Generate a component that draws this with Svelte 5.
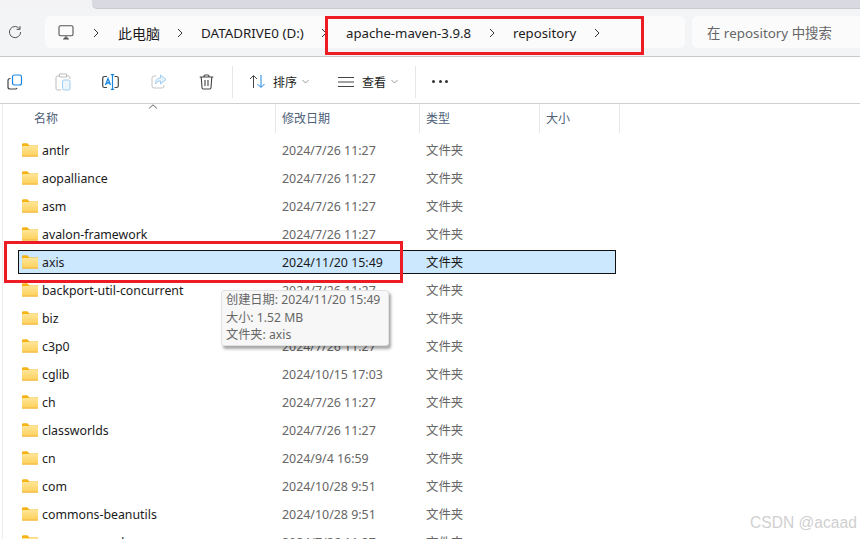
<script>
  const rows = [
    ['antlr', '2024/7/26 11:27'],
    ['aopalliance', '2024/7/26 11:27'],
    ['asm', '2024/7/26 11:27'],
    ['avalon-framework', '2024/7/26 11:27'],
    ['axis', '2024/11/20 15:49', true],
    ['backport-util-concurrent', '2024/7/26 11:27'],
    ['biz', '2024/7/26 11:27'],
    ['c3p0', '2024/7/26 11:27'],
    ['cglib', '2024/10/15 17:03'],
    ['ch', '2024/7/26 11:27'],
    ['classworlds', '2024/7/26 11:27'],
    ['cn', '2024/9/4 16:59'],
    ['com', '2024/10/28 9:51'],
    ['commons-beanutils', '2024/10/28 9:51'],
    ['commons-codec', '2024/7/26 11:27']
  ];
</script>

{#snippet chev()}
  <svg class="chev" width="6" height="10" viewBox="0 0 6 10"><path d="M1 1l4 4-4 4" fill="none" stroke="#333" stroke-width="1"/></svg>
{/snippet}
{#snippet caret()}
  <svg class="caret" width="7" height="5" viewBox="0 0 7 5"><path d="M.5 1l3 3 3-3" fill="none" stroke="#999" stroke-width="1"/></svg>
{/snippet}

<div class="win">
  <div class="tabs"><div class="tabfill"></div></div>
  <div class="addr">
    <svg class="refresh" width="14" height="14" viewBox="0 0 14 14"><path d="M11.8 4.2A5.6 5.6 0 1 0 12.6 7" fill="none" stroke="#555" stroke-width="1"/><path d="M12 1v3.4H8.6" fill="none" stroke="#555" stroke-width="1"/></svg>
    <div class="crumbs">
      <svg class="pc" width="16" height="15" viewBox="0 0 16 15"><rect x="1" y=".7" width="14" height="10" rx="1.5" fill="none" stroke="#555" stroke-width="1.1"/><path d="M6 13h4M5 14h6M8 11v2" stroke="#555" stroke-width="1.1"/></svg>
      <span class="c1">{@render chev()}</span>
      <span class="t w1">此电脑</span>
      <span class="c2">{@render chev()}</span>
      <span class="t w2">DATADRIVE0 (D:)</span>
      <span class="c3">{@render chev()}</span>
      <span class="t w3">apache-maven-3.9.8</span>
      <span class="c4">{@render chev()}</span>
      <span class="t w4">repository</span>
      <span class="c5">{@render chev()}</span>
    </div>
    <div class="search">在 repository 中搜索</div>
  </div>
  <div class="toolbar">
    <svg class="ic i1" width="16" height="16" viewBox="0 0 16 16"><rect x="5.5" y="1" width="9" height="10" rx="2" fill="none" stroke="#1a86e0" stroke-width="1.2"/><path d="M3.5 4.5H3a2 2 0 0 0-2 2V13a2 2 0 0 0 2 2h5.5a2 2 0 0 0 1.5-1" fill="none" stroke="#444" stroke-width="1.2"/></svg>
    <svg class="ic i2" width="16" height="18" viewBox="0 0 16 18"><path d="M4 3H2.500A1.500 1.500 0 0 0 1 4.500v11A1.500 1.500 0 0 0 2.500 17H6M12 3h1.500A1.500 1.500 0 0 1 15 4.500V6M4.500 1h7v3h-7z" fill="none" stroke="#bbb" stroke-width="1"/><rect x="7.500" y="7" width="7.500" height="10" rx="1.500" fill="#eef6fd" stroke="#9fcdf0"/></svg>
    <svg class="ic i3" width="17" height="16" viewBox="0 0 17 16"><path d="M5 2.500H2.500A1.800 1.800 0 0 0 .7 4.300v7.400a1.800 1.800 0 0 0 1.800 1.800H5M12.500 2.500h2a1.800 1.800 0 0 1 1.800 1.800v7.400a1.800 1.800 0 0 1-1.800 1.800h-2" fill="none" stroke="#444" stroke-width="1.200"/><path d="M8.800.7h3.400M8.800 15.300h3.400M10.500.7v14.600" fill="none" stroke="#1a86e0" stroke-width="1.200"/><path d="M3.500 11l2.500-6.500L8.500 11M4.500 9h3" fill="none" stroke="#1a86e0" stroke-width="1.300"/></svg>
    <svg class="ic i4" width="16" height="15" viewBox="0 0 16 15"><path d="M5 2H3a2 2 0 0 0-2 2v8a2 2 0 0 0 2 2h8a2 2 0 0 0 2-2v-1" fill="none" stroke="#c4c4c4" stroke-width="1"/><path d="M9.500 1v3C6 4 4.500 6.500 4.500 10c1.200-2.200 3-3 5-3v3L15 5.500z" fill="#e6f2fc" stroke="#9fcdf0"/></svg>
    <svg class="ic i5" width="15" height="16" viewBox="0 0 15 16"><path d="M.700 3h13.600M5 3V2.200A1.200 1.200 0 0 1 6.200 1h2.600A1.200 1.200 0 0 1 10 2.200V3M2.200 3l.8 10.800A1.300 1.300 0 0 0 4.300 15h6.400a1.300 1.300 0 0 0 1.300-1.200L12.800 3M6 6v6M9 6v6" fill="none" stroke="#444" stroke-width="1.100"/></svg>
    <div class="sep s1"></div>
    <svg class="ic i6" width="16" height="13" viewBox="0 0 16 13"><path d="M1 4l3.500-3.500L8 4M4.500 1v12" fill="none" stroke="#444" stroke-width="1"/><path d="M8.500 9l3.500 3.500L15.500 9M12 0v12" fill="none" stroke="#1a86e0" stroke-width="1"/></svg>
    <span class="tb l1">排序</span>{@render caret()}
    <svg class="ic i7" width="16" height="10" viewBox="0 0 16 10"><path d="M0 .5h16M0 5h16M0 9.500h16" stroke="#444" stroke-width="1"/></svg>
    <span class="tb l2">查看</span>{@render caret()}
    <div class="sep s2"></div>
    <div class="dots"><i></i><i></i><i></i></div>
  </div>
  <div class="list">
    <svg class="sort" width="10" height="5" viewBox="0 0 10 5"><path d="M1 4.500L5 .8l4 3.700" fill="none" stroke="#666" stroke-width="1"/></svg>
    <div class="head">
      <div class="h name">名称</div>
      <div class="h date">修改日期</div>
      <div class="h type">类型</div>
      <div class="h size">大小</div>
    </div>
    <div class="rows">
      {#each rows as r}
        <div class="row" class:sel={r[2]}>
          <svg class="folder" width="16" height="14" viewBox="0 0 16 14">
            <path d="M0 1.500A1.200 1.200 0 0 1 1.200.3h4L7.500 2.500H16V5H0z" fill="#f5b316"/>
            <rect x="0" y="3" width="16" height="10.500" rx="1" fill="url(#fg)"/>
            <rect x="0" y="12.600" width="16" height="1" fill="#f0b63c"/>
          </svg>
          <span class="n">{r[0]}</span>
          <span class="d">{r[1]}</span>
          <span class="k">文件夹</span>
        </div>
      {/each}
    </div>
    <svg width="0" height="0" class="defs"><defs><linearGradient id="fg" x1="0" y1="0" x2="0" y2="1"><stop offset="0" stop-color="#ffe596"/><stop offset="1" stop-color="#fdcf58"/></linearGradient></defs></svg>
  </div>

  <div class="mark m1"></div>
  <div class="mark m2"></div>
  <div class="tip">
    <div>创建日期: 2024/11/20 15:49</div>
    <div>大小: 1.52 MB</div>
    <div>文件夹: axis</div>
  </div>
  <div class="wm">CSDN @acaad</div>
</div>

<style>
  :global(body) { margin: 0; background: #fff; }
  .win {
    position: relative; width: 860px; height: 539px; overflow: hidden; background: #fff;
    font-family: "Noto Sans", "Noto Sans CJK SC", sans-serif; font-size: 12px; color: #1a1a1a;
  }
  .tabs { height: 9px; background: #f3f3f5; padding-left: 92px; }
  .tabfill { height: 8px; background: #d8d9e1; border-bottom: 1px solid #c9c9cf; border-bottom-left-radius: 5px; }
  .addr {
    height: 48px; box-sizing: border-box; background: #f3f4f6; border-bottom: 1px solid #c9c9c9;
    display: flex; align-items: center; padding-left: 8px; padding-bottom: 1px;
  }
  .refresh { flex: none; margin-right: 23px; }
  .crumbs {
    width: 640px; height: 32px; background: #fbfbfc; border-radius: 6px; display: flex; align-items: center;
    padding-left: 13px; padding-top: 1px; box-sizing: border-box; flex: none;
  }
  .t { font-size: 13.2px; white-space: nowrap; color: #1c1c1c; flex: none; }
  .pc { flex: none; }
  .c1, .c2, .c3, .c4, .c5 { display: flex; flex: none; }
  .c1 { margin-left: 19px; }
  .w1 { margin-left: 19px; width: 42px; font-size: 14px; }
  .c2 { margin-left: 17px; }
  .w2 { margin-left: 18px; width: 103px; font-size: 13.4px; }
  .c3 { margin-left: 17px; }
  .w3 { margin-left: 19px; width: 125px; }
  .c4 { margin-left: 18px; }
  .w4 { margin-left: 18px; width: 63px; }
  .c5 { margin-left: 18px; }
  .search {
    margin-left: 7px; flex: 1; height: 32px; line-height: 34px; background: #fbfbfc; border-radius: 6px 0 0 6px;
    padding-left: 15px; color: #666; font-size: 13.4px; white-space: nowrap;
  }
  .toolbar { height: 47px; box-sizing: border-box; border-bottom: 1px solid #cfcfcf; display: flex; align-items: center; padding-top: 3px; }
  .ic { flex: none; }
  .i1 { margin-left: 7px; }
  .i2 { margin-left: 32px; }
  .i3 { margin-left: 31px; }
  .i4 { margin-left: 32px; }
  .i5 { margin-left: 32px; }
  .sep { width: 1px; height: 32px; background: #e6e6e6; flex: none; }
  .s1 { margin-left: 18px; }
  .i6 { margin-left: 16px; }
  .tb { font-size: 12px; color: #222; flex: none; }
  .l1 { margin-left: 8px; width: 25px; }
  .caret { flex: none; margin-left: 4px; }
  .i7 { margin-left: 29px; }
  .l2 { margin-left: 8px; width: 25px; }
  .s2 { margin-left: 17px; }
  .dots { display: flex; gap: 3.5px; margin-left: 16px; }
  .dots i { width: 3px; height: 3px; border-radius: 50%; background: #333; display: block; }
  .list { position: relative; margin-left: 2px; border-left: 1px solid #ededed; }
  .sort { position: absolute; left: 145px; top: 0; }
  .defs { position: absolute; }
  .head { display: grid; grid-template-columns: 273px 144px 120px 80px; height: 27px; }
  .h { color: #4d6078; font-size: 12px; line-height: 29px; border-right: 1px solid #e6e6e6; white-space: nowrap; padding-left: 6px; }
  .name { padding-left: 31px; }
  .rows { padding-top: 7px; }
  .row {
    height: 24px; margin: 0 0 4px 15px; width: 598px; box-sizing: border-box; border: 1px solid transparent;
    display: grid; grid-template-columns: 20px 240px 144px 1fr; align-items: center; padding-left: 3px; white-space: nowrap;
  }
  .sel { background: #cce8ff; border-color: #111; }
  .folder { display: block; }
  .n { font-size: 12.33px; color: #1a1a1a; }
  .d { font-size: 12.4px; color: #666; }
  .k { font-size: 12.4px; color: #666; }
  .sel .d, .sel .k { color: #1a1a1a; }
  .mark { position: absolute; border: 3px solid #ed1c24; box-sizing: border-box; pointer-events: none; }
  .m1 { left: 325px; top: 16px; width: 319px; height: 39px; }
  .m2 { left: 4px; top: 241px; width: 399px; height: 42px; }
  .tip {
    position: absolute; left: 221px; top: 290px; width: 168px; height: 56px; box-sizing: border-box;
    background: #f7f7f7; border: 1px solid #e2e2e2; border-radius: 3px; padding: 0 4px;
    box-shadow: 2px 3px 3px rgba(0,0,0,.35); color: #666; font-size: 12.2px; line-height: 17.5px; white-space: nowrap;
  }
  .wm { position: absolute; left: 750px; top: 514px; font-family: "Liberation Sans", sans-serif; font-size: 15.6px; color: #d0d0d0; white-space: nowrap; }
</style>
